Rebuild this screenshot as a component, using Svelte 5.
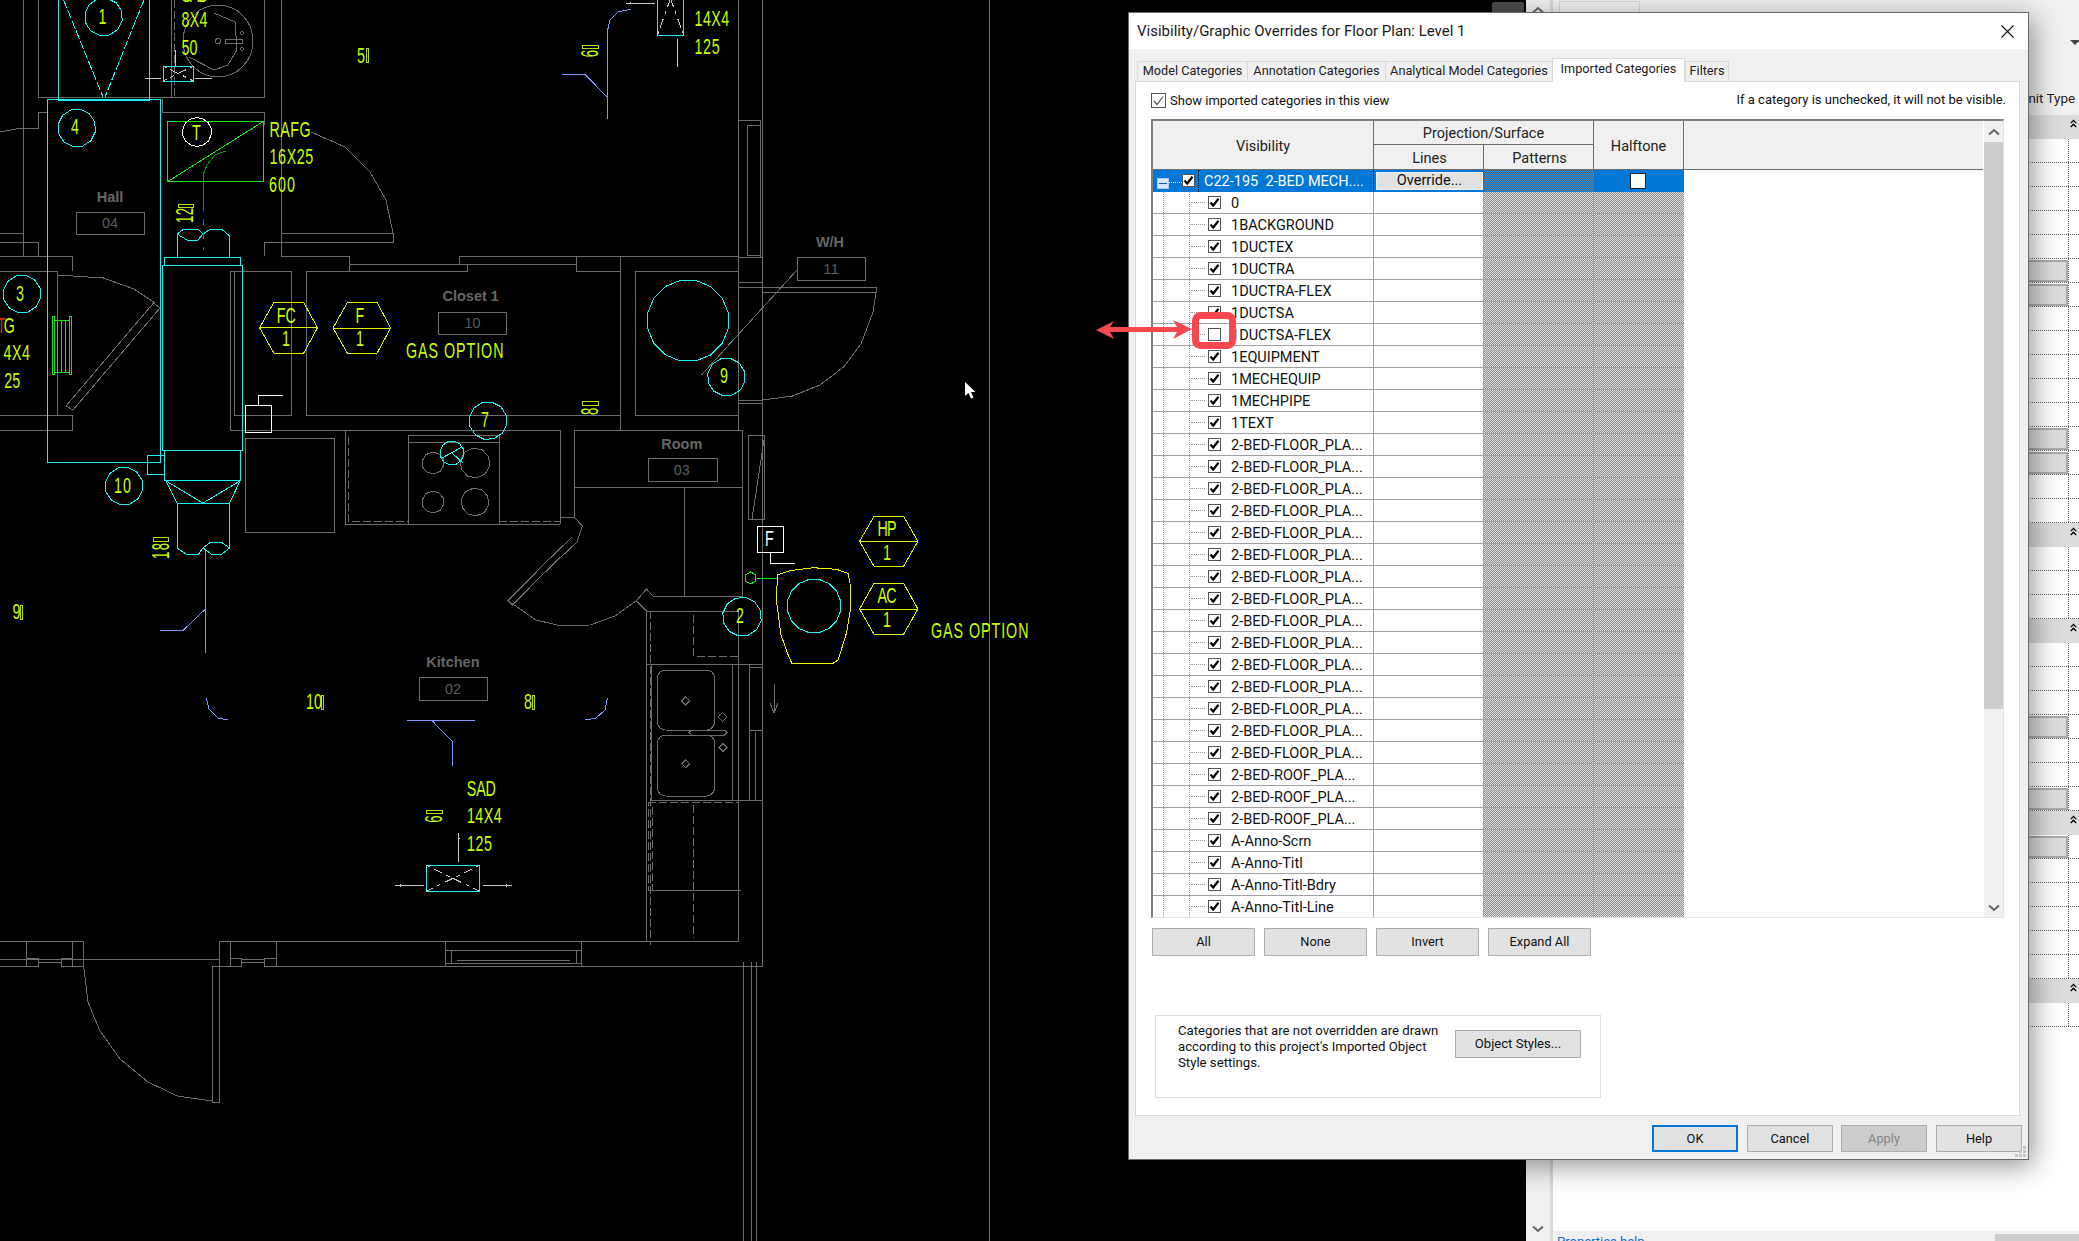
<script>
  const names = ['0','1BACKGROUND','1DUCTEX','1DUCTRA','1DUCTRA-FLEX','1DUCTSA','1DUCTSA-FLEX','1EQUIPMENT','1MECHEQUIP','1MECHPIPE','1TEXT',
    ...Array(15).fill('2-BED-FLOOR_PLA...'), ...Array(3).fill('2-BED-ROOF_PLA...'),'A-Anno-Scrn','A-Anno-Titl','A-Anno-Titl-Bdry','A-Anno-Titl-Line'];

  // panel rows on the right: s = section header, b = row holding a button
  const sectionAt = new Set([16,20,28,35]);
  const buttonAt = new Set([5,6,12,13,24,27,29]);
  const sideRows = Array.from({length:38},(_,i)=>({s:sectionAt.has(i-1),b:buttonAt.has(i-1)}));

  function poly(cx,cy,r,n=12,rot=0.2){
    const p=[];
    for(let i=0;i<n;i++){const a=rot+i*2*Math.PI/n;p.push((cx+r*Math.cos(a)).toFixed(1)+','+(cy+r*Math.sin(a)).toFixed(1));}
    return p.join(' ');
  }
  const tagCircles=[[103.6,17,19],[76.8,128,19],[22,294,19],[124,486,19],[488,420.7,19],[726.4,377,19],[742,616.7,19.5],[688,320.7,41],[814,606,27],[452,453,12]];

  const gray = `M23.5 0V256 M38 0V97H264V0 M171 0V97 M162 99V112H264V125 M0 132L22 128H38V112H47 M311 132L345 147L370 172L386 200L393 233 M281 0V256H349V271H467V264 M349 264H576 M459 264V256H738 M281 233H393V242H264V256 M0 256H72.5V271 M0 271H57.5V415 M0 415H72.5V430H0 M0 233H23.5 M0 242H38.5V256 M57.5 275L103.5 278L134 289L155 303 M153.5 303L160 308L73 410L66 406Z M230 271V430 M234 271V415 M230 271H291.5V415H234 M306 271V415H620 M306 271H349 M230 430H560 M574 430H742 M245 438H334V532H245Z M345 430V524H560 M408 435V524 M499 435V524 M408 435H499 M408 442H499 M560 430V524 M574 430V517L582.5 526L577 542L540 577 M572 537L540 568 M560 548L508 600.7L512.5 605L560 557 M508 600.7L536 620L560 625.7L590 625L615 616L636.4 600.7L646.4 589L653 596H742V430 M574.6 487H742 M684 487V596 M636.4 600.7L646.4 611H738 M646.4 611V941.7H738V611 M646 664H762.5 M650 800H762.5 M651 664V800 M732 664V800 M749 664V800 M738.6 0V430 M762.5 0V966 M738.6 120H760V257 M747 125H760V255H747Z M738 257H762.5 M576 257V271H620 M620 257V430 M635 271H738V282 M635 271V415H738 M738 282H762.5 M738 287H757 M738 400H762 M738 403H762.5V430 M738 403V430 M762 292H876V287H757 M876 292L873 312L861 344L843.6 367L820 385L792.5 396L763 400 M797 270L701.4 375 M574 517H560 M748 435H764V519H748Z M764 440L752 519 M692 730H724.6L727 732.5L724.6 735H692L689 732.5Z M749 667H762V730H749 M755 732V800 M749 730H762 M989 0V1241 M774 684V713 M770 703L774 713L778 703 M0 941H84 M219 941H738 M0 959H219 M26.5 941V966 M72.5 941V966 M83.7 941V966 M0 966H38V958H26.5 M61 966H83.7 M61 958H72.5 M38 959H61 M38 962H61 M61 958V966 M219.4 941V1102H212V966H241V958H230.6 M230.6 941V966 M276.5 941V966 M264 966H762.5 M264 958V966H276.5 M264 958H276.5 M241 959H264 M241 962H264 M445.4 941V966 M581.6 941V966 M445.4 950H581.6 M456.6 960H570 M445.4 963H581.6 M451 950V963 M576 950V963 M83.7 966L88 1002L99.5 1030L120 1059L148 1082L177.5 1096L212 1101 M743 962V1241 M751 962V1241 M756.6 962V1241`;

  const dashed = `M174 0V97 M348 437V521H408 M499 521H560 M650.7 611V945 M693.6 615V656H738 M648 802H738V890H648Z M652.5 807V890 M693.6 805V938 M648 890.7H741`;

  const cyan = `M47.5 99.3H160.7V462.3H47.5Z M58 0V100H149V0 M163 66H193.6V81H163Z M162.5 265H242.5V450H162.5Z M164 257H240.7V265H164Z M177 257V234L184 229H198L203 234L210.7 229H221.4L229.6 236V257 M177 234L187 240H198L203 234 M164 450V480H240.7V450 M166 481L177 503H229.6L240 481 M166 481L203 503L240 481 M177 503V548L187 554.7H198L203 548L210.7 542H221L229.6 548V503 M203 548L212 554.7H221L229.6 548 M147.5 455V474.7H164 M147.5 455H164 M426.4 865.3H479.6V891.3H426.4Z M657.5 0V35H683.6V0 M442 458L462 447 M452 453L463 463`;

  const blue = `M562 74H584.6L607 97 M607 33V119 M607 33L610 20L618 12L631 9 M205.4 550V652.7 M205.4 609L183.6 630H160 M206.4 698L209 709L218 718L227.5 720 M407 720H475 M431.4 720L452.5 741.7V765.7 M607.5 698L605 710L596 718L585.4 720`;

  const white = `M145 78H160.7 M195 78H212 M175 50V66 M395.4 885.3H424 M482.9 885.3H511.8 M458.6 833V861.7 M626 3H655 M677.5 39V66.7 M400 884V887 M506 884V887 M457.5 838H460 M630 2V4 M677 62H678`;
  const xmarks = `M163 66L193.6 81 M193.6 66L163 81 M426.4 865.3L479.6 891.3 M479.6 865.3L426.4 891.3 M657.5 35L670 0 M683.6 35L671 0`;

  const green = `M167.5 121.7H263V181.7H167.5Z M167.5 181.7L263 121.7 M52.5 316.3H54.6V374H52.5Z M69.6 316.3H71.8V374H69.6Z M54.6 320H69.6 M54.6 372H69.6 M57 320V372 M61 320V372 M65 320V372 M757 578H777.5`;

  const labels=[['Hall',110,202],['Closet 1',470.7,301],['W/H',830,246.7],['Room',681.8,449],['Kitchen',452.9,667.3]];
  const nums=[['04',110,228.3],['10',472.5,327.7],['11',831,274],['03',681.8,475],['02',452.9,694]];
  const boxes=[[76.4,212,68.2,22],[438,312,68,22],[797.5,257,68.2,23],[648,458,69,23],[419,677,68.5,23]];

  const sx = 0.65;
  const sv = 0.55;
  // x, baseline, width, text
  const txt=[
    [181.4,2,27,'SAD'],[181.4,27,26,'8X4'],[181.4,55,16,'50'],
    [269.6,137,41,'RAFG'],[269.6,163.7,43.6,'16X25'],[269,191.7,26,'600'],
    [98.5,24,5,'1'],[71,134,8,'4'],[16,301,8,'3'],[114,493.3,17,'10'],[481,427.3,8,'7'],[720,383.3,8,'9'],[736,623.3,8,'2'],[192,140.3,8,'T'],
    [466.8,796,29,'SAD'],[467,823.3,34.6,'14X4'],[467,850.7,25,'125'],
    [694.6,25.7,34.6,'14X4'],[694.6,54,25,'125'],
    [3.6,360,26.4,'4X4'],[4.3,388,16,'25'],
    [276.8,322.7,19,'FC'],[282,345.7,5,'1'],[355.5,322.7,7,'F'],[356,345.7,5,'1'],
    [406,357.7,97.5,'GAS OPTION'],[877.5,535.7,19,'HP'],[883,560,5,'1'],[877.5,603.3,19,'AC'],[883,627.3,5,'1'],[931,638,97.5,'GAS OPTION']
  ];
  // horizontal dimensions with their inch mark: x, baseline, width, text, mark x
  const dims=[[357,62.7,8,'5',366],[12.5,619,8,'9',20.4],[306,709,16,'10',321.4],[524,709,8,'8',532]];
  // rotated dimensions: baseline x, start y, length, text, mark y, mark x
  const vert=[[193,223,15,'12',204,178],[598,57.3,7.5,'6',45,582],[598,415,9,'8',401.7,582],[168.6,559,16,'18',537.7,153],[442,822.7,7.7,'6',810,426]];
</script>

{#snippet tick()}
  <svg class="tick" viewBox="0 0 11 11" width="11" height="11"><path d="M1.5 5.5L4.2 8.5L9.5 1.8" fill="none" stroke="#000" stroke-width="2.2"/></svg>
{/snippet}

{#snippet dbl()}
  <svg class="dbl" viewBox="0 0 9 11" width="7" height="9"><path d="M1 5L4.5 1.5L8 5M1 10L4.5 6.5L8 10" fill="none" stroke="#000" stroke-width="1.7"/></svg>
{/snippet}

<div class="page">
  <div class="canvas">
    <svg class="cad" width="1526" height="1241" viewBox="0 0 1526 1241">
      <g fill="none" stroke-width="1" shape-rendering="crispEdges">
        <path d={gray} stroke="#6c6c6c"/>
        <path d={dashed} stroke="#6c6c6c" stroke-dasharray="8 3"/>
        <ellipse cx="218" cy="41" rx="35" ry="36" stroke="#6c6c6c"/>
        <path d="M214 13L235 22L237 50L228 65L214 70L189 57" stroke="#6c6c6c"/>
        <path d="M225 39H242V43H225Z" stroke="#6c6c6c"/>
        <circle cx="218" cy="41" r="2.5" stroke="#6c6c6c"/>
        <circle cx="242" cy="33" r="1.2" stroke="#6c6c6c"/>
        <circle cx="242" cy="49" r="1.2" stroke="#6c6c6c"/>
        <rect x="657.5" y="670" width="57" height="60" rx="8" stroke="#6c6c6c"/>
        <rect x="657.5" y="735" width="57" height="61" rx="8" stroke="#6c6c6c"/>
        {#each [[685.7,701,4],[685.7,763.7,4],[722.5,717,4.5],[723,747.7,4]] as d}
          <polygon points={poly(d[0],d[1],d[2],4,0)} stroke="#6c6c6c"/>
        {/each}
        {#each [[433,463,11],[475,463,15],[433,502,11],[475,502,14]] as c}
          <polygon points={poly(c[0],c[1],c[2],10)} stroke="#6c6c6c"/>
        {/each}
        {#each boxes as b}
          <rect x={b[0]} y={b[1]} width={b[2]} height={b[3]} stroke="#6c6c6c"/>
        {/each}
        <path d={cyan} stroke="#19f0f0"/>
        <path d="M63.6 0L103 97 M144 0L105 97" stroke="#19f0f0" stroke-dasharray="9 2"/>
        {#each tagCircles as c}
          <polygon points={poly(c[0],c[1],c[2],c[2]>25?16:12)} stroke="#19f0f0"/>
        {/each}
        <path d={blue} stroke="#8296ff"/>
        <path d={white} stroke="#c8c8c8"/>
        <path d={xmarks} stroke="#c8c8c8" stroke-dasharray="4 4 9 5"/>
        <path d={green} stroke="#16e616"/>
        <path d="M225.7 151L215 155L207 165L203 175V205" stroke="#0d9a0d"/>
        <path d="M203 205V250" stroke="#0d9a0d" stroke-dasharray="6 8"/>
        <polygon points={poly(750.7,578,6,6,0.5)} stroke="#16e616"/>
        <polygon points="777.5,575 790,570.7 813,567.7 836.4,569.3 848,573.3 850,583.3 850.7,608.3 846.4,633.3 838.2,660 833,663.3 791.8,663.3 788.2,655 781,635 776.4,600" stroke="#f0f000"/>
        <path d="M259.6 327.7L274 302.3H303.6L317.5 327.7L303.6 353.3H274ZM259.6 327.7H317.5 M333 328L347.5 302.3H377L390.7 328L377 353.3H347.5ZM333 328H390.7 M859.6 541.3L874 516.3H903.6L917.9 541.3L903.6 566.3H874ZM859.6 541.3H917.9 M859.6 609L874 583.3H903.6L917.9 609L903.6 634.3H874ZM859.6 609H917.9" stroke="#dcf000"/>
        <polygon points={poly(197,132,14.5,14)} stroke="#fff"/>
        <path d="M245.4 405.7H271.8V432.3H245.4Z M258 405.7V395.7H282.9 M757.5 526.3H783.6V552.3H757.5Z M770.4 552.3V563.3H794.6" stroke="#fff"/>
        <rect class="doctab" x="1492" y="2" width="32" height="12" rx="3"/>
        {#each dims as d}
          <rect x={d[4]} y={d[1]-14} width="2.5" height="14" stroke="#b4e000"/>
        {/each}
        {#each vert as v}
          <rect x={v[5]} y={v[4]} width={v[0]-v[5]} height="3.5" stroke="#b4e000"/>
        {/each}
      </g>
      {#each txt as t}
        <text class="cadtxt" transform="translate({t[0]} {t[1]}) scale({sx} 1)" textLength={t[2]/sx} lengthAdjust="spacing">{t[3]}</text>
      {/each}
      {#each dims as d}
        <text class="cadtxt" transform="translate({d[0]} {d[1]}) scale({sx} 1)" textLength={d[2]/sx} lengthAdjust="spacing">{d[3]}</text>
      {/each}
      <text class="cadtxt" transform="translate(-3 333) scale({sx} 1)" textLength={18/sx} lengthAdjust="spacing"><tspan class="cadred">T</tspan>G</text>
      {#each vert as v}
        <text class="cadrot" transform="translate({v[0]} {v[1]}) rotate(-90) scale({sv} 1)" textLength={v[2]/sv} lengthAdjust="spacing">{v[3]}</text>
      {/each}
      <text class="cadwhite" transform="translate(765 545.7) scale({sx} 1)">F</text>
      {#each labels as l}
        <text class="cadlabel" x={l[1]} y={l[2]}>{l[0]}</text>
      {/each}
      {#each nums as l}
        <text class="cadnum" x={l[1]} y={l[2]} textLength="16" lengthAdjust="spacingAndGlyphs">{l[0]}</text>
      {/each}
      <polygon class="cursor" points="965,382 965,396 968.5,393 971,398.5 973.5,397.5 971,392 975.5,392"/>
    </svg>
  </div>

  <div class="strip">
    <svg class="chev" viewBox="0 0 12 8" width="12" height="8"><path d="M1 6.5L6 2L11 6.5" fill="none" stroke="#666" stroke-width="2"/></svg>
    <svg class="chev" viewBox="0 0 12 8" width="12" height="8"><path d="M1 1.5L6 6L11 1.5" fill="none" stroke="#666" stroke-width="2"/></svg>
  </div>

  <div class="side">
    <div class="sidetop">
      <div class="typebox"></div>
      <svg class="drop" viewBox="0 0 10 6" width="10" height="6"><path d="M0 0H10L5 5Z" fill="#444"/></svg>
      <div class="type">Unit Type</div>
    </div>
    <div class="siderows">
      {#each sideRows as r, i}
        {#if r.s}
          <div class="sec">{@render dbl()}</div>
        {:else if i===0}
          <div class="sec">{@render dbl()}</div>
        {:else}
          <div class="srow">
            <div class="sleft">{#if r.b}<div class="sbtn"></div>{/if}</div>
            <div class="sright"></div>
          </div>
        {/if}
      {/each}
    </div>
    <div class="sidefill"></div>
    <div class="sidebottom"><span class="help">Properties help</span><span class="applybtn"></span></div>
  </div>

  <div class="dialog">
    <div class="titlebar">
      <span class="title">Visibility/Graphic Overrides for Floor Plan: Level 1</span>
      <svg class="close" viewBox="0 0 13 13" width="13" height="13"><path d="M0.5 0.5L12.5 12.5M12.5 0.5L0.5 12.5" stroke="#111" stroke-width="1.1" fill="none"/></svg>
    </div>
    <div class="tabs">
      <div class="tab t1">Model Categories</div>
      <div class="tab t2">Annotation Categories</div>
      <div class="tab t3">Analytical Model Categories</div>
      <div class="tab active">Imported Categories</div>
      <div class="tab t5">Filters</div>
    </div>
    <div class="panel">
      <div class="showrow">
        <label class="show">
          <span class="bigbox"><svg viewBox="0 0 13 13" width="13" height="13"><path d="M2 7L5 10.5L11 2.5" fill="none" stroke="#555" stroke-width="1.2"/></svg></span>
          Show imported categories in this view
        </label>
        <span class="hint">If a category is unchecked, it will not be visible.</span>
      </div>

      <div class="table">
        <div class="tmain">
          <div class="thead">
            <div class="th vis">Visibility</div>
            <div class="th proj">Projection/Surface</div>
            <div class="th half">Halftone</div>
            <div class="th rest"></div>
            <div class="th lines">Lines</div>
            <div class="th pats">Patterns</div>
          </div>
          <div class="tr sel">
            <div class="cv rootcell">
              <span class="minus"><i></i></span>
              <span class="rootdash"></span>
              <span class="cb rootcb">{@render tick()}</span>
              <span class="rootname">C22-195&nbsp; 2-BED MECH....</span>
            </div>
            <div class="cl sel"><button class="override">Override...</button></div>
            <div class="cp bluedither"></div>
            <div class="ch"><span class="whitebox"></span></div>
          </div>
          {#each names as n, i}
            <div class="tr">
              <div class="cv">
                <span class="g1"></span>
                <span class="g2"><i></i></span>
                <span class="cb">{#if i !== 6}{@render tick()}{/if}</span>
                <span class="nm">{n}</span>
              </div>
              <div class="cl"></div>
              <div class="cp"></div>
              <div class="cp c4"></div>
            </div>
          {/each}
        </div>
        <div class="vbar">
          <div class="vbtn"><svg viewBox="0 0 12 8" width="12" height="8"><path d="M1 6.5L6 2L11 6.5" fill="none" stroke="#666" stroke-width="2"/></svg></div>
          <div class="thumb"></div>
          <div class="vtrack"></div>
          <div class="vbtn dn"><svg viewBox="0 0 12 8" width="12" height="8"><path d="M1 1.5L6 6L11 1.5" fill="none" stroke="#666" stroke-width="2"/></svg></div>
        </div>
      </div>

      <div class="actions">
        <button class="btn">All</button>
        <button class="btn">None</button>
        <button class="btn">Invert</button>
        <button class="btn">Expand All</button>
      </div>

      <div class="note">
        <p>Categories that are not overridden are drawn according to this project's Imported Object Style settings.</p>
        <button class="btn obj">Object Styles...</button>
      </div>
    </div>
    <div class="foot">
      <button class="btn fb ok">OK</button>
      <button class="btn fb">Cancel</button>
      <button class="btn fb apply">Apply</button>
      <button class="btn fb">Help</button>
    </div>
    <svg class="grip" viewBox="0 0 12 12" width="12" height="12"><path d="M8 0h3v3H8zM4 4h3v3H4zM8 4h3v3H8zM0 8h3v3H0zM4 8h3v3H4zM8 8h3v3H8z" fill="#c4c4c4"/></svg>
  </div>

  <svg class="mark" width="150" height="50" viewBox="1095 308 150 50">
    <rect x="1195.5" y="315.5" width="37" height="30" rx="5" fill="none" stroke="#f7474f" stroke-width="7"/>
    <path d="M1096 330L1114 321L1110 327H1177L1173 320L1192 329L1173 339L1177 332H1110L1114 339Z" fill="#f7474f"/>
  </svg>
</div>

<style>
  :global(body){margin:0;background:#000;}
  .page{position:relative;display:flex;width:2079px;height:1241px;overflow:hidden;background:#000;font-family:"Roboto","Liberation Sans",sans-serif;color:#111;}
  .canvas{width:1526px;height:1241px;flex:none;}
  .cad{display:block;}
  .doctab{fill:#4c4c4c;stroke:none;}
  .cadtxt{font:22px "Liberation Sans",sans-serif;fill:#c8ff00;}
  .cadrot{font:24px "Liberation Sans",sans-serif;fill:#c8ff00;}
  .cadred{fill:#d02a10;}
  .cadwhite{font:22px "Liberation Sans",sans-serif;fill:#f4f4f4;}
  .cadlabel{font:bold 14.5px "Liberation Sans",sans-serif;fill:#666;text-anchor:middle;}
  .cadnum{font:15.5px "Liberation Sans",sans-serif;fill:#5c5c5c;text-anchor:middle;}
  .cursor{fill:#fff;}

  .strip{width:24px;flex:none;background:#f0f0f0;border-right:3px solid #d9d9d9;display:flex;flex-direction:column;justify-content:space-between;align-items:center;padding:6px 0 8px;box-sizing:content-box;height:1227px;}
  .side{flex:1;display:flex;flex-direction:column;background:#fff;}
  .sidetop{height:115px;background:#f0f0f0;position:relative;flex:none;display:flex;flex-direction:column;align-items:flex-end;padding-right:4px;box-sizing:border-box;}
  .typebox{position:absolute;left:6px;top:1px;width:79px;height:30px;border:1px solid #d5d5d5;}
  .drop{margin-top:40px;margin-right:-5px;}
  .type{margin-top:44px;font-size:13.4px;color:#222;line-height:18px;}
  .siderows{flex:none;}
  .sec{height:24px;background:#dcdcdc;display:flex;justify-content:flex-end;align-items:flex-start;padding:4px 2px 0 0;box-sizing:border-box;}
  .srow{height:24px;display:grid;grid-template-columns:1fr 11px;border-bottom:1px dotted #666;box-sizing:border-box;}
  .sleft{display:flex;align-items:center;}
  .sright{border-left:1px dotted #666;}
  .sbtn{height:22px;width:100%;box-sizing:border-box;background:#dcdcdc;border:2px solid #aaa;}
  .sidefill{flex:1;background:#fff;}
  .sidebottom{height:10px;background:#f0f0f0;display:flex;justify-content:space-between;flex:none;overflow:hidden;}
  .help{font-size:13px;color:#0a6fd0;margin-left:4px;line-height:16px;margin-top:3px;}
  .applybtn{width:84px;background:#ccc;margin-top:3px;}

  .dialog{position:absolute;left:1128px;top:12px;width:901px;height:1148px;box-sizing:border-box;background:#f0f0f0;border:1px solid #6a6a6a;box-shadow:4px 6px 26px rgba(0,0,0,.42);display:flex;flex-direction:column;}
  .titlebar{height:36px;flex:none;background:#fff;display:flex;align-items:center;justify-content:space-between;padding:0 14px 0 8px;}
  .title{font-size:15px;color:#1a1a1a;}
  .tabs{display:flex;align-items:flex-end;height:24px;margin:8px 0 0 8px;flex:none;position:relative;z-index:1;font-size:12.7px;}
  .tab{height:20px;box-sizing:border-box;border:1px solid #d9d9d9;border-bottom:none;display:flex;align-items:center;justify-content:center;background:#f0f0f0;color:#222;margin-right:-1px;padding-bottom:2px;}
  .t1{width:111px;}.t2{width:139px;}.t3{width:168px;}
  .tab.active{height:24px;width:133px;background:#fff;padding-bottom:5px;border-color:#d9d9d9;position:relative;margin-bottom:-1px;}
  .t5{width:44px;margin-left:1px;}
  .panel{margin:0 0 0 6px;width:885px;height:1035px;box-sizing:border-box;background:#fff;border:1px solid #d9d9d9;flex:none;padding-left:15px;}
  .showrow{height:37px;display:flex;justify-content:space-between;align-items:center;padding-right:13px;padding-bottom:1px;box-sizing:border-box;font-size:13px;}
  .show{display:flex;align-items:center;gap:4px;}
  .bigbox{width:15px;height:15px;box-sizing:border-box;border:1px solid #555;display:flex;align-items:center;justify-content:center;background:#fff;}
  .hint{color:#111;margin-top:-2px;}

  .table{display:flex;width:853px;height:799px;box-sizing:border-box;border-top:2px solid #808080;border-left:2px solid #808080;border-right:1px solid #e3e3e3;border-bottom:1px solid #e3e3e3;font-size:14.5px;overflow:hidden;}
  .tmain{width:830px;flex:none;overflow:hidden;height:796px;}
  .thead{display:grid;grid-template-columns:221px 110px 110px 90px 299px;height:48px;grid-template-rows:24px 24px;background:#f0f0f0;border-bottom:1px solid #6d6d6d;box-sizing:content-box;}
  .th{display:flex;align-items:center;justify-content:center;color:#222;border-right:1px solid #6d6d6d;box-sizing:border-box;padding-top:2px;}
  .vis{grid-row:1/3;grid-column:1;}
  .proj{grid-row:1;grid-column:2/4;border-bottom:1px solid #6d6d6d;}
  .half{grid-row:1/3;grid-column:4;}
  .rest{grid-row:1/3;grid-column:5;border-right:none;border-left:1px solid #f8f8f8;}
  .lines{grid-row:2;grid-column:2;padding-left:2px;}
  .pats{grid-row:2;grid-column:3;padding-left:2px;}

  .tr{display:grid;grid-template-columns:221px 110px 110px 90px;height:22px;width:531px;}
  .tr.sel{background:#0078d7;}
  .cv{display:flex;border-right:1px solid #a0a0a0;border-bottom:1px solid #a0a0a0;padding-left:10px;box-sizing:border-box;overflow:hidden;}
  .cl{border-right:1px solid #a0a0a0;border-bottom:1px solid #a0a0a0;box-sizing:border-box;}
  .cp{box-sizing:border-box;background:repeating-conic-gradient(#8c8c8c 0 25%,#e0e0e0 0 50%) 0 0/2px 2px;border-bottom:1px solid #a0a0a0;border-right:1px solid #a0a0a0;}
  .c4{border-right:none;}
  .g1{width:25px;border-left:1px dotted #9a9a9a;flex:none;}
  .g2{width:18px;border-left:1px dotted #9a9a9a;flex:none;display:flex;align-items:center;}
  .g2 i{display:block;width:14px;border-top:1px dotted #9a9a9a;margin-left:1px;}
  .cb{width:13px;height:13px;box-sizing:border-box;border:1px solid #555;background:#fff;flex:none;margin-top:4px;display:flex;align-items:center;justify-content:center;}
  .tick{display:block;flex:none;}
  .nm{margin-left:10px;line-height:22px;padding-top:1px;white-space:nowrap;color:#111;}

  .rootcell,.tr.sel .cl,.tr.sel .ch{border:none;}
  .rootcell{padding-left:4px;align-items:flex-start;}
  .minus{width:12px;height:11px;box-sizing:border-box;background:#d7e7f7;border:1px solid #a8c8e8;margin-top:8px;display:flex;align-items:center;justify-content:center;flex:none;}
  .minus i{display:block;width:8px;border-top:1px solid #0a60b0;}
  .rootdash{width:13px;border-top:1px dotted #e8f2fb;margin-top:12px;flex:none;}
  .rootcb{margin-top:4px;}
  .rootname{color:#fff;line-height:22px;padding:1px 0 0 5px;white-space:nowrap;border:1px dotted #111;border-top:none;border-bottom:none;margin-left:3px;flex:1;overflow:hidden;height:22px;box-sizing:border-box;}
  .cl.sel{display:flex;align-items:center;justify-content:center;padding:0 1px 0 2px;}
  .override{width:107px;height:18px;padding:1px 0 0;border:1px solid #f2f2f2;background:#e1e1e1;font:inherit;color:#111;line-height:14px;margin-top:-1px;}
  .bluedither{background:repeating-conic-gradient(#0078d7 0 25%,#6f7c88 0 50%) 0 0/2px 2px;border:none;}
  .ch{display:flex;justify-content:center;align-items:center;padding:0 3px 1px 0;}
  .whitebox{width:16px;height:16px;box-sizing:border-box;background:#fff;border:1px solid #222;}

  .vbar{width:20px;margin-left:1px;flex:none;display:flex;flex-direction:column;background:#f0f0f0;}
  .vbtn{height:21px;display:flex;align-items:center;justify-content:center;flex:none;}
  .vbtn.dn{height:22px;padding-top:4px;box-sizing:border-box;}
  .thumb{height:567px;background:#cdcdcd;flex:none;}
  .vtrack{flex:1;}

  .actions{display:flex;gap:9px;margin:10px 0 0 1px;}
  .btn{height:28px;width:103px;box-sizing:border-box;padding:0 0 2px;background:#e1e1e1;border:1px solid #adadad;font:12.8px "Roboto","Liberation Sans",sans-serif;color:#111;}
  .note{margin:59px 0 0 4px;width:446px;height:83px;box-sizing:border-box;border:1px solid #ddd;display:flex;align-items:flex-start;padding:7px 19px 0 22px;justify-content:space-between;}
  .note p{margin:0;width:266px;font-size:13.2px;line-height:16px;color:#111;}
  .obj{width:126px;margin-top:7px;flex:none;font-size:13.1px;}
  .foot{display:flex;justify-content:flex-end;gap:9px;margin-top:9px;padding-right:6px;}
  .fb{width:86px;height:27px;padding:0;}
  .ok{border:2px solid #0078d7;}
  .apply{background:#ccc;color:#838383;margin-left:-1px;}
  .grip{position:absolute;right:1px;bottom:1px;}
  .mark{position:absolute;left:1095px;top:308px;}
</style>
